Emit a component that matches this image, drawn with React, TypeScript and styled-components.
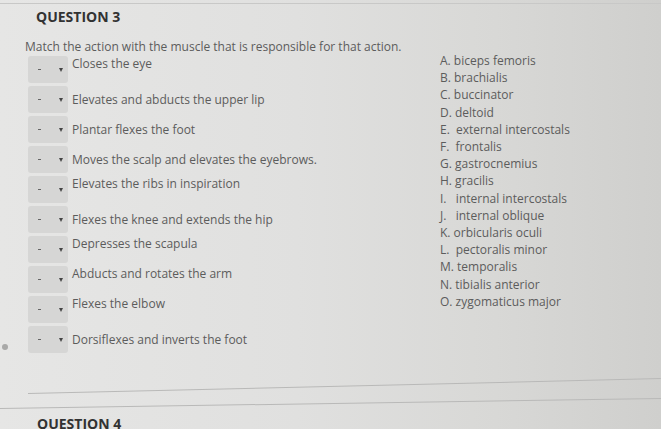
import React from "react";
import styled, { createGlobalStyle } from "styled-components";

const GlobalStyle = createGlobalStyle`
  html, body {
    margin: 0;
    padding: 0;
  }
  body {
    font-family: "Open Sans", "Liberation Sans", sans-serif;
    background: #e2e2e1;
  }
`;

const Page = styled.div`
  width: 661px;
  height: 429px;
  overflow: hidden;
  position: relative;
  background: linear-gradient(90deg, #e6e6e5 0%, #e0e0df 45%, #d8d8d6 75%, #cfcfcd 100%);
  color: #5c5c5c;
`;

const TopRule = styled.div`
  margin-top: 3px;
  height: 1px;
  background: #c8c8c7;
`;

const Heading = styled.h2`
  margin: 5px 0 0 36px;
  font-size: 14px;
  line-height: 16px;
  font-weight: 700;
  color: #323232;
`;

const Prompt = styled.p`
  margin: 14px 0 0 25px;
  font-size: 12px;
  line-height: 16px;
`;

const Body = styled.div`
  display: grid;
  grid-template-columns: 412px 1fr;
  margin-top: -3px;
`;

const Rows = styled.div`
  display: flex;
  flex-direction: column;
  gap: 3px;
  padding: 4px 0 0 28px;
`;

const Row = styled.div<{ $top?: boolean; $marker?: boolean }>`
  display: flex;
  align-items: ${(p) => (p.$top ? "flex-start" : "center")};
  gap: 4px;
  position: relative;
  font-size: 12px;
  line-height: 14px;

  ${(p) =>
    p.$marker &&
    `
    &::before {
      content: "";
      position: absolute;
      left: -26px;
      top: 18px;
      width: 6px;
      height: 6px;
      border-radius: 50%;
      background: #a9a9a8;
    }
  `}
`;

const Select = styled.div`
  width: 40px;
  height: 27px;
  flex: none;
  border-radius: 3px;
  background: #d6d6d5;
  display: flex;
  align-items: center;
  justify-content: space-between;
  padding: 0 5px 0 10px;
  box-sizing: border-box;
  color: #555;
`;

const Dash = styled.span`
  width: 3px;
  height: 1px;
  background: #666;
`;

const Caret = styled.span`
  width: 0;
  height: 0;
  border-left: 2.5px solid transparent;
  border-right: 2.5px solid transparent;
  border-top: 4px solid #444;
`;

const Label = styled.span<{ $top?: boolean }>`
  padding-top: ${(p) => (p.$top ? 1 : 0)}px;
  white-space: nowrap;
`;

const Choices = styled.ol`
  list-style: none;
  margin: 0;
  padding: 0 0 0 28px;
  font-size: 12px;
  line-height: 17.2px;
`;

const Choice = styled.li`
  white-space: pre;
`;

const Footer = styled.div`
  margin-top: 40px;
  display: flex;
  flex-direction: column;
`;

const Rule = styled.div<{ $inset: number; $tilt: number; $gap: number }>`
  height: 1px;
  margin: ${(p) => p.$gap}px 0 0 ${(p) => p.$inset}px;
  background: #b9b9b8;
  transform: rotate(${(p) => p.$tilt}deg);
  transform-origin: left center;
`;

const NextHeading = styled.h2`
  margin: 7px 0 0 37px;
  font-size: 14px;
  line-height: 16px;
  font-weight: 700;
  color: #323232;
`;

const actions: { text: string; top?: boolean }[] = [
  { text: "Closes the eye", top: true },
  { text: "Elevates and abducts the upper lip" },
  { text: "Plantar flexes the foot" },
  { text: "Moves the scalp and elevates the eyebrows." },
  { text: "Elevates the ribs in inspiration", top: true },
  { text: "Flexes the knee and extends the hip" },
  { text: "Depresses the scapula", top: true },
  { text: "Abducts and rotates the arm", top: true },
  { text: "Flexes the elbow", top: true },
  { text: "Dorsiflexes and inverts the foot" },
];

const muscles = [
  "A. biceps femoris",
  "B. brachialis",
  "C. buccinator",
  "D. deltoid",
  "E.  external intercostals",
  "F.  frontalis",
  "G. gastrocnemius",
  "H. gracilis",
  "I.   internal intercostals",
  "J.   internal oblique",
  "K. orbicularis oculi",
  "L.  pectoralis minor",
  "M. temporalis",
  "N. tibialis anterior",
  "O. zygomaticus major",
];

export default function App() {
  return (
    <Page>
      <GlobalStyle />
      <TopRule />
      <Heading>QUESTION 3</Heading>
      <Prompt>Match the action with the muscle that is responsible for that action.</Prompt>
      <Body>
        <Rows>
          {actions.map((a, i) => (
            <Row key={a.text} $top={a.top} $marker={i === actions.length - 1}>
              <Select>
                <Dash />
                <Caret />
              </Select>
              <Label $top={a.top}>{a.text}</Label>
            </Row>
          ))}
        </Rows>
        <Choices>
          {muscles.map((m) => (
            <Choice key={m}>{m}</Choice>
          ))}
        </Choices>
      </Body>
      <Footer>
        <Rule $inset={28} $tilt={-1.35} $gap={0} />
        <Rule $inset={0} $tilt={-0.87} $gap={14} />
        <NextHeading>QUESTION 4</NextHeading>
      </Footer>
    </Page>
  );
}
